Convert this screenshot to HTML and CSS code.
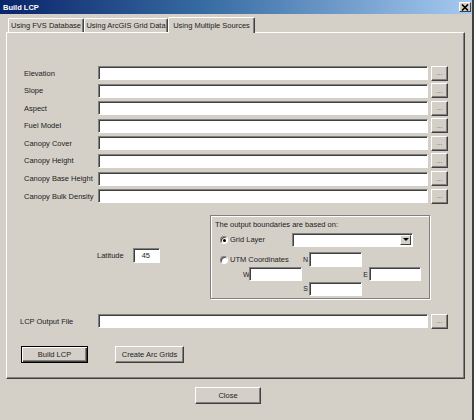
FILE: index.html
```html
<!DOCTYPE html>
<html>
<head>
<meta charset="utf-8">
<title>Build LCP</title>
<link rel="stylesheet" href="styles.css">
</head>
<body>
<div class="window">
  <div class="titlebar">
    <span class="title">Build LCP</span>
    <span class="xbtn"><svg width="8" height="7" viewBox="0 0 8 7"><path d="M1 0.5 L7 6.5 M7 0.5 L1 6.5" stroke="#000" stroke-width="1.6"/></svg></span>
  </div>
  <div class="tabs">
    <div class="tab t1">Using FVS Database</div>
    <div class="tab t2">Using ArcGIS Grid Data</div>
    <div class="tab t3 selected">Using Multiple Sources</div>
  </div>
  <div class="panel">
    <div class="rows">
      <span class="lbl">Elevation</span><span class="field"></span><span class="browse">...</span>
      <span class="lbl">Slope</span><span class="field"></span><span class="browse">...</span>
      <span class="lbl">Aspect</span><span class="field"></span><span class="browse">...</span>
      <span class="lbl">Fuel Model</span><span class="field"></span><span class="browse">...</span>
      <span class="lbl">Canopy Cover</span><span class="field"></span><span class="browse">...</span>
      <span class="lbl">Canopy Height</span><span class="field"></span><span class="browse">...</span>
      <span class="lbl">Canopy Base Height</span><span class="field"></span><span class="browse">...</span>
      <span class="lbl">Canopy Bulk Density</span><span class="field"></span><span class="browse">...</span>
    </div>
    <div class="middle">
      <div class="lat">
        <span class="lat-lbl">Latitude</span>
        <span class="field lat-field">45</span>
      </div>
      <div class="group">
        <div class="group-title">The output boundaries are based on:</div>
        <div class="grid-row">
          <span class="radio-opt r-grid"><span class="radio checked"></span>Grid Layer</span>
          <span class="combo"><span class="combo-btn"><span class="arrow"></span></span></span>
        </div>
        <div class="coords">
          <span class="radio-opt r-utm"><span class="radio"></span>UTM Coordinates</span>
          <span class="clbl n-l">N</span><span class="field cbox n-b"></span>
          <span class="clbl w-l">W</span><span class="field cbox w-b"></span>
          <span class="clbl e-l">E</span><span class="field cbox e-b"></span>
          <span class="clbl s-l">S</span><span class="field cbox s-b"></span>
        </div>
      </div>
    </div>
    <div class="outrow">
      <span class="lbl out-lbl">LCP Output File</span><span class="field"></span><span class="browse">...</span>
    </div>
    <div class="actions">
      <span class="btn default">Build LCP</span>
      <span class="btn arc">Create Arc Grids</span>
    </div>
  </div>
  <div class="footer">
    <span class="btn close">Close</span>
  </div>
</div>
</body>
</html>
```

FILE: styles.css
```css
html, body {
  margin: 0;
  padding: 0;
  background: #d4d0c8;
}
body {
  font-family: "Liberation Sans", Arial, sans-serif;
  font-size: 7.5px;
  color: #222;
}
.window {
  width: 474px;
  height: 420px;
  box-sizing: border-box;
  background: #d4d0c8;
  border-right: 2px solid #404040;
  overflow: hidden;
}
.titlebar {
  height: 14px;
  background: linear-gradient(90deg, #0a246a 0%, #3a6ea5 45%, #a6caf0 100%);
  display: flex;
  align-items: center;
  justify-content: space-between;
  padding: 0 1px 0 3px;
}
.title {
  color: #fff;
  font-weight: bold;
  font-size: 7.5px;
}
.xbtn {
  width: 12px;
  height: 10px;
  box-sizing: border-box;
  background: #d4d0c8;
  border-top: 1px solid #fff;
  border-left: 1px solid #fff;
  border-right: 1px solid #404040;
  border-bottom: 1px solid #404040;
  display: flex;
  align-items: center;
  justify-content: center;
}
.xbtn svg { display: block; }
.tabs {
  display: flex;
  align-items: flex-end;
  height: 18px;
  margin: 0 7px 0 6px;
  padding-left: 2px;
  position: relative;
  z-index: 2;
}
.tab {
  height: 14px;
  box-sizing: border-box;
  border-top: 1px solid #fff;
  border-left: 1px solid #fff;
  border-right: 1px solid #404040;
  border-radius: 2px 2px 0 0;
  box-shadow: inset -1px 0 #808080;
  display: flex;
  align-items: center;
  justify-content: center;
  background: #d4d0c8;
  white-space: nowrap;
}
.t1 { width: 76px; }
.t2 { width: 84px; }
.t3 { width: 87px; }
.tab.selected {
  height: 16px;
  margin-bottom: -1px;
  padding-bottom: 1px;
}
.panel {
  margin: 0 7px 0 6px;
  height: 347px;
  box-sizing: border-box;
  border-top: 1px solid #fff;
  border-left: 1px solid #fff;
  border-right: 1px solid #404040;
  border-bottom: 1px solid #404040;
  box-shadow: inset -1px -1px #808080;
  position: relative;
  z-index: 1;
}
.rows {
  margin-top: 33px;
  padding-left: 17px;
  display: grid;
  grid-template-columns: 71px 330px 17px;
  grid-template-rows: repeat(8, 14px);
  column-gap: 3px;
  row-gap: 3.6px;
  align-items: center;
}
.lbl {
  white-space: nowrap;
}
.field {
  display: block;
  height: 14px;
  box-sizing: border-box;
  background: #fff;
  border-top: 1px solid #808080;
  border-left: 1px solid #808080;
  border-right: 1px solid #fff;
  border-bottom: 1px solid #fff;
  box-shadow: inset 1px 1px #404040;
}
.browse {
  height: 15px;
  width: 17px;
  box-sizing: border-box;
  border-top: 1px solid #fff;
  border-left: 1px solid #fff;
  border-right: 1px solid #404040;
  border-bottom: 1px solid #404040;
  box-shadow: inset -1px -1px #808080;
  display: flex;
  align-items: center;
  justify-content: center;
  font-size: 7px;
  color: #666;
  line-height: 1;
  padding-bottom: 1px;
}
.middle {
  margin-top: 11.8px;
  height: 84px;
  display: flex;
}
.lat {
  margin-left: 90px;
  width: 113px;
  padding-top: 33px;
  display: flex;
  align-items: center;
  height: 15px;
}
.lat-lbl {
  width: 36px;
}
.lat-field {
  width: 27px;
  height: 15px;
  text-align: right;
  padding-right: 9px;
  line-height: 13px;
}
.group {
  width: 220px;
  height: 84px;
  box-sizing: border-box;
  border: 1px solid #808080;
  box-shadow: inset 1px 1px #fff, 1px 1px #fff;
  padding: 4px 0 0 4px;
}
.group-title {
  line-height: 9px;
  height: 9px;
}
.grid-row {
  margin-top: 4px;
  padding-left: 5px;
  display: flex;
  align-items: center;
  height: 14px;
}
.radio-opt {
  display: flex;
  align-items: center;
  white-space: nowrap;
}
.r-grid { width: 72px; }
.radio {
  width: 8px;
  height: 8px;
  box-sizing: border-box;
  border-radius: 50%;
  background: #fff;
  border: 1px solid;
  border-color: #808080 #fff #fff #808080;
  box-shadow: inset 1px 1px #404040;
  margin-right: 2px;
  position: relative;
}
.radio.checked::after {
  content: "";
  position: absolute;
  left: 2px;
  top: 2px;
  width: 3px;
  height: 3px;
  border-radius: 50%;
  background: #000;
}
.combo {
  width: 121px;
  height: 14px;
  box-sizing: border-box;
  background: #fff;
  border-top: 1px solid #808080;
  border-left: 1px solid #808080;
  border-right: 1px solid #fff;
  border-bottom: 1px solid #fff;
  box-shadow: inset 1px 1px #404040;
  display: flex;
  justify-content: flex-end;
  padding: 1px;
}
.combo-btn {
  width: 11px;
  height: 10px;
  box-sizing: border-box;
  background: #d4d0c8;
  border-top: 1px solid #fff;
  border-left: 1px solid #fff;
  border-right: 1px solid #404040;
  border-bottom: 1px solid #404040;
  display: flex;
  align-items: center;
  justify-content: center;
}
.arrow {
  width: 0;
  height: 0;
  border-left: 3px solid transparent;
  border-right: 3px solid transparent;
  border-top: 3px solid #000;
}
.coords {
  margin-top: 5px;
  padding-left: 5px;
  display: grid;
  grid-template-columns: 23px 6px 53px 7px 53px 7px 52px;
  grid-template-rows: 15px 15px 14px;
}
.r-utm {
  grid-column: 1 / 4;
  grid-row: 1;
  align-self: center;
  margin-top: 1px;
}
.clbl {
  text-align: right;
  padding-right: 1px;
  align-self: center;
  font-size: 7px;
}
.cbox { height: 14px; }
.n-l { grid-column: 4; grid-row: 1; }
.n-b { grid-column: 5; grid-row: 1; height: 15px; }
.w-l { grid-column: 2; grid-row: 2; }
.w-b { grid-column: 3; grid-row: 2; }
.e-l { grid-column: 6; grid-row: 2; }
.e-b { grid-column: 7; grid-row: 2; }
.s-l { grid-column: 4; grid-row: 3; }
.s-b { grid-column: 5; grid-row: 3; }
.outrow {
  margin-top: 15px;
  padding-left: 13px;
  display: grid;
  grid-template-columns: 75px 330px 17px;
  column-gap: 3px;
  align-items: center;
  height: 15px;
}
.actions {
  margin-top: 17px;
  padding-left: 14px;
  display: flex;
  gap: 27px;
}
.btn {
  height: 17px;
  box-sizing: border-box;
  border-top: 1px solid #fff;
  border-left: 1px solid #fff;
  border-right: 1px solid #404040;
  border-bottom: 1px solid #404040;
  box-shadow: inset -1px -1px #808080;
  display: flex;
  align-items: center;
  justify-content: center;
  background: #d4d0c8;
  white-space: nowrap;
}
.btn.default {
  width: 67px;
  border: 1px solid #000;
  box-shadow: inset 1px 1px #fff, inset -1px -1px #404040, inset -2px -2px #808080;
}
.btn.arc { width: 69px; }
.footer {
  margin-top: 8px;
  padding-left: 195px;
  display: flex;
}
.btn.close { width: 66px; }
```
